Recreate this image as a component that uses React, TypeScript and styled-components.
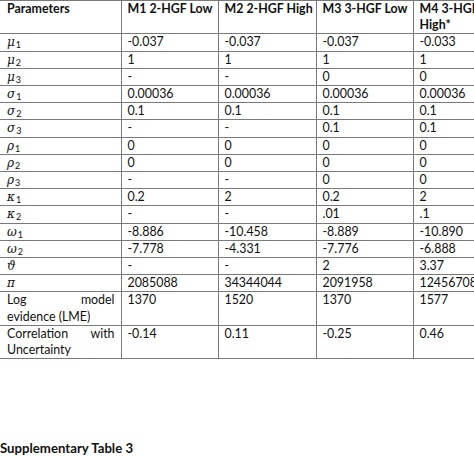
import React from "react";
import styled, { createGlobalStyle } from "styled-components";

const Global = createGlobalStyle`
  html, body { margin: 0; padding: 0; background: #fff; }
  body { overflow: hidden; width: 474px; height: 457px; }
`;

const Page = styled.div`
  width: 474px;
  height: 457px;
  overflow: hidden;
  font-family: Lato, "Liberation Sans", sans-serif;
  font-size: 12.4px;
  color: #111;
  display: flex;
  flex-direction: column;
`;

const Table = styled.table`
  border-collapse: collapse;
  table-layout: fixed;
  width: 510px;
  flex: none;
`;

const Row = styled.tr<{ $lines?: number }>`
  height: ${(p) => (p.$lines ?? 1) * 16.2 + 1}px;
`;

const Cell = styled.td<{ $head?: boolean }>`
  border: 1px solid #7a7a7a;
  padding: 0 0 0 6px;
  line-height: 16.2px;
  height: ${(p) => (p.$head ? 32.4 : 16.2)}px;
  vertical-align: top;
  white-space: nowrap;
  overflow: visible;
  font-weight: ${(p) => (p.$head ? 700 : 400)};
  &:first-child {
    border-left: none;
    padding: 0 6px 0 7px;
    white-space: normal;
  }
`;

const Sym = styled.span`
  font-family: "DejaVu Serif", "Liberation Serif", serif;
  font-style: italic;
  font-size: 12px;
  line-height: 1;
`;

const Sub = styled.sub`
  font-size: 9px;
  line-height: 1;
  vertical-align: baseline;
  position: relative;
  top: 2px;
  margin-left: 1px;
`;

const Spread = styled.span`
  display: flex;
  justify-content: space-between;
`;

const Caption = styled.div`
  margin-top: 81px;
  font-weight: 700;
  font-size: 13.2px;
  line-height: 17px;
  padding-left: 0;
`;

type Param = { sym: string; sub?: string; vals: string[] };

const params: Param[] = [
  { sym: "μ", sub: "1", vals: ["-0.037", "-0.037", "-0.037", "-0.033"] },
  { sym: "μ", sub: "2", vals: ["1", "1", "1", "1"] },
  { sym: "μ", sub: "3", vals: ["-", "-", "0", "0"] },
  { sym: "σ", sub: "1", vals: ["0.00036", "0.00036", "0.00036", "0.00036"] },
  { sym: "σ", sub: "2", vals: ["0.1", "0.1", "0.1", "0.1"] },
  { sym: "σ", sub: "3", vals: ["-", "-", "0.1", "0.1"] },
  { sym: "ρ", sub: "1", vals: ["0", "0", "0", "0"] },
  { sym: "ρ", sub: "2", vals: ["0", "0", "0", "0"] },
  { sym: "ρ", sub: "3", vals: ["-", "-", "0", "0"] },
  { sym: "κ", sub: "1", vals: ["0.2", "2", "0.2", "2"] },
  { sym: "κ", sub: "2", vals: ["-", "-", ".01", ".1"] },
  { sym: "ω", sub: "1", vals: ["-8.886", "-10.458", "-8.889", "-10.890"] },
  { sym: "ω", sub: "2", vals: ["-7.778", "-4.331", "-7.776", "-6.888"] },
  { sym: "ϑ", vals: ["-", "-", "2", "3.37"] },
  { sym: "π", vals: ["2085088", "34344044", "2091958", "12456708"] },
];

export default function App() {
  return (
    <>
      <Global />
      <Page>
        <Table>
          <colgroup>
            <col style={{ width: 121 }} />
            <col style={{ width: 97 }} />
            <col style={{ width: 98 }} />
            <col style={{ width: 97 }} />
            <col style={{ width: 97 }} />
          </colgroup>
          <tbody>
            <Row $lines={2}>
              <Cell $head>Parameters</Cell>
              <Cell $head>M1 2-HGF Low</Cell>
              <Cell $head>M2 2-HGF High</Cell>
              <Cell $head>M3 3-HGF Low</Cell>
              <Cell $head>
                M4 3-HGF
                <br />
                High*
              </Cell>
            </Row>
            {params.map((p, i) => (
              <Row key={i}>
                <Cell>
                  <Sym>{p.sym}</Sym>
                  {p.sub && <Sub>{p.sub}</Sub>}
                </Cell>
                {p.vals.map((v, j) => (
                  <Cell key={j}>{v}</Cell>
                ))}
              </Row>
            ))}
            <Row $lines={2}>
              <Cell>
                <Spread>
                  <span>Log</span>
                  <span>model</span>
                </Spread>
                evidence (LME)
              </Cell>
              <Cell>1370</Cell>
              <Cell>1520</Cell>
              <Cell>1370</Cell>
              <Cell>1577</Cell>
            </Row>
            <Row $lines={2}>
              <Cell>
                <Spread>
                  <span>Correlation</span>
                  <span>with</span>
                </Spread>
                Uncertainty
              </Cell>
              <Cell>-0.14</Cell>
              <Cell>0.11</Cell>
              <Cell>-0.25</Cell>
              <Cell>0.46</Cell>
            </Row>
          </tbody>
        </Table>
        <Caption>Supplementary Table 3</Caption>
      </Page>
    </>
  );
}
